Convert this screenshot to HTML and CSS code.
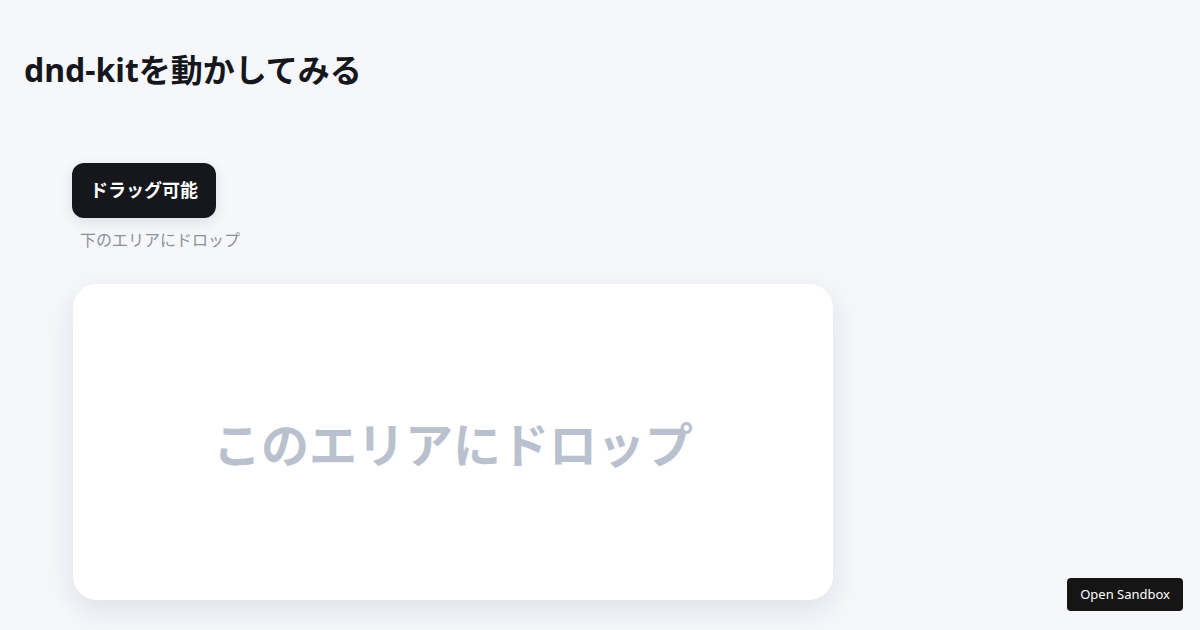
FILE: index.html
```html
<!DOCTYPE html>
<html lang="ja">

<head>
    <meta charset="UTF-8">
    <meta name="viewport" content="width=device-width, initial-scale=1.0">
    <title>dnd-kitを動かしてみる</title>
    <link rel="stylesheet" href="styles.css">
</head>

<body>

    <h1 class="title">dnd-kitを動かしてみる</h1>

    <div class="playground">
        <div class="drag-area">
            <button class="draggable" type="button">ドラッグ可能</button>
            <p class="hint">下のエリアにドロップ</p>
        </div>

        <div class="drop-zone">
            <p class="drop-label">このエリアにドロップ</p>
        </div>
    </div>

    <a class="sandbox-link" href="#">Open Sandbox</a>

</body>

</html>
```

FILE: styles.css
```css
body {
    font-family: "Noto Sans", "Noto Sans CJK JP", sans-serif;
    background-color: #f6f7fb;
    color: #15171c;
    margin: 0;
    padding: 0 24px;
    height: 630px;
    box-sizing: border-box;
    overflow: hidden;
}

.title {
    font-size: 32px;
    font-weight: 700;
    margin: 0;
    padding-top: 47px;
    line-height: 46px;
}

.playground {
    padding: 70px 0 0 48px;
}

.drag-area {
    display: flex;
    flex-direction: column;
    align-items: flex-start;
}

.draggable {
    font-family: inherit;
    font-size: 18px;
    font-weight: 700;
    line-height: 26px;
    color: #fff;
    background-color: #15171c;
    border: none;
    border-radius: 12px;
    padding: 14px 18px 15px;
    box-shadow: 0 4px 14px rgba(20, 24, 40, 0.1);
    cursor: grab;
}

.hint {
    margin: 10px 0 0 8px;
    font-size: 16px;
    line-height: 24px;
    color: #8b9099;
}

.drop-zone {
    margin-top: 32px;
    margin-left: 1px;
    width: 760px;
    height: 316px;
    background-color: #fff;
    border-radius: 24px;
    box-shadow: 0 10px 30px rgba(20, 30, 60, 0.1);
    display: flex;
    justify-content: center;
    align-items: center;
}

.drop-label {
    margin: 0;
    font-size: 48px;
    font-weight: 700;
    color: #b9c1ce;
}

.sandbox-link {
    position: fixed;
    right: 17px;
    bottom: 19px;
    background-color: #151515;
    color: #fff;
    font-size: 13px;
    line-height: 17px;
    padding: 8px 13px;
    border-radius: 4px;
    text-decoration: none;
}
```
